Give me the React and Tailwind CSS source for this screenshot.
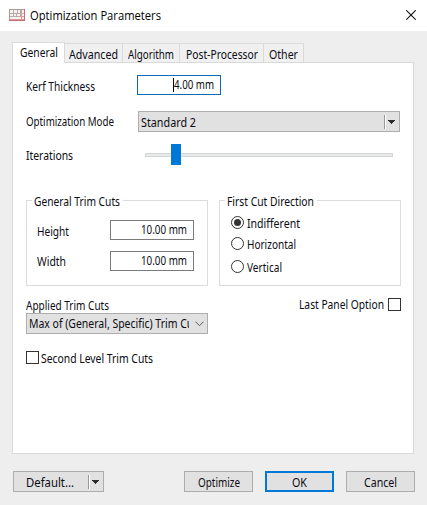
import React, { useLayoutEffect, useRef } from 'react';

// Condenses a label horizontally so that it occupies exactly `w` pixels.
function Label({ children, w, className = '' }) {
  const inner = useRef(null);
  useLayoutEffect(() => {
    const el = inner.current;
    const fit = () => {
      el.style.transform = 'none';
      el.style.transform = `scaleX(${w / el.getBoundingClientRect().width})`;
    };
    fit();
    document.fonts?.ready.then(fit);
  }, [w]);
  return (
    <span className={`block h-4 shrink-0 ${className}`} style={{ width: w }}>
      <span ref={inner} className="block w-max origin-left">{children}</span>
    </span>
  );
}

function Caret({ className = '' }) {
  return (
    <svg className={className} width="7" height="4" viewBox="0 0 7 4" shapeRendering="crispEdges">
      <path d="M0 0h7v1h-1v1h-1v1h-1v1h-1v-1h-1v-1h-1v-1h-1z" fill="#2b2b2b" />
    </svg>
  );
}

function Tab({ children, w, className }) {
  return (
    <div className={`flex h-[19px] items-center justify-center border-t border-r border-[#dadada] bg-[#f0f0f0] pt-[3px] ${className}`}>
      <Label w={w}>{children}</Label>
    </div>
  );
}

function Field({ children, className = 'border-[#7a7a7a]' }) {
  return (
    <div className={`flex h-5 w-[84px] items-center justify-end border bg-white pr-[6px] ${className}`}>
      {children}
    </div>
  );
}

function Group({ title, w, children }) {
  return (
    <section className="h-[86px] w-[182px] border border-[#dcdcdc]">
      <h2 className="-mt-2 ml-[5px] h-4 w-fit bg-white pt-px pr-[3px] pl-[2px]">
        <Label w={w}>{title}</Label>
      </h2>
      {children}
    </section>
  );
}

function Radio({ label, w, checked, className }) {
  return (
    <div className={`flex h-[13px] items-center gap-[3px] ${className}`}>
      <span className="flex size-[13px] shrink-0 items-center justify-center rounded-full border border-[#333] bg-white">
        {checked && <span className="size-[7px] rounded-full bg-[#333]" />}
      </span>
      <Label w={w} className="mt-[2px]">{label}</Label>
    </div>
  );
}

function Button({ children, w, className = 'border border-[#adadad]' }) {
  return (
    <div className={`flex h-[21px] w-[69px] items-center justify-center bg-[#e1e1e1] ${className}`}>
      <Label w={w} className="mt-[2px]">{children}</Label>
    </div>
  );
}

export default function App() {
  return (
    <div className="flex h-[505px] w-[427px] flex-col overflow-hidden bg-[#eeeeee] font-['Noto_Sans','Open_Sans',sans-serif] text-[12px] leading-4 whitespace-nowrap text-[#0c0c14]">
      <header className="flex h-[31px] shrink-0 items-center bg-white pl-[9px]">
        <svg width="16" height="12" viewBox="0 0 16 12" className="-mt-px">
          <rect x=".5" y=".5" width="15" height="11" fill="#f7f0ef" stroke="#a59d98" />
          <path d="M1 4.5h11M1 7.5h9M4.5 1v7M8.5 1v3M7.5 5v3M11.5 1v7" stroke="#b5aea8" fill="none" />
          <path d="M12.5 1v3.500h2M10 7.500h5M12.500 5v6M1 10.500h14" stroke="#dd9a9e" fill="none" />
          <path d="M15.500 0v12M0 11.500h16" stroke="#c96a70" fill="none" />
        </svg>
        <h1 className="mt-px ml-[5px] font-['Open_Sans','Noto_Sans',sans-serif] text-[12px] text-black">
          <Label w={131}>Optimization Parameters</Label>
        </h1>
        <svg className="-mt-px mr-[11px] ml-auto" width="10" height="10" viewBox="0 0 10 10">
          <path d="M.3.3 9.700 9.700M9.700.3.3 9.700" stroke="#111" strokeWidth="1.100" />
        </svg>
      </header>

      <nav className="mt-[11px] flex h-5 shrink-0 items-end pl-3">
        <div className="z-10 -mb-px flex h-[21px] w-[53px] items-center justify-center border-x border-t border-[#dadada] bg-white">
          <Label w={38}>General</Label>
        </div>
        <Tab w={49} className="w-[58px]">Advanced</Tab>
        <Tab w={46} className="w-[57px]">Algorithm</Tab>
        <Tab w={72} className="w-[84px]">Post-Processor</Tab>
        <Tab w={29} className="w-10">Other</Tab>
      </nav>

      <main className="ml-3 flex h-[392px] w-[402px] shrink-0 flex-col border border-[#d9d9d9] bg-white pt-3 pl-[13px]">
        <div className="flex h-5 items-center">
          <div className="w-[111px] pt-[3px]"><Label w={69}>Kerf Thickness</Label></div>
          <Field className="border-[#0f69b4]">
            <span className="h-[14px] w-px bg-black" />
            <Label w={40}>4.00 mm</Label>
          </Field>
        </div>

        <div className="mt-4 flex h-[21px] items-center">
          <div className="w-28"><Label w={88}>Optimization Mode</Label></div>
          <div className="flex h-[21px] w-[262px] items-center border border-[#adadad] bg-[#e1e1e1] pl-[2px]">
            <Label w={55} className="mt-[2px]">Standard 2</Label>
            <span className="ml-auto h-[14px] w-[2px] border-l border-[#999] bg-white" />
            <Caret className="mr-[4px] ml-[2px]" />
          </div>
        </div>

        <div className="mt-3 flex h-[21px] items-center">
          <div className="w-[119px] pt-[3px]"><Label w={47}>Iterations</Label></div>
          <div className="flex h-1 w-[248px] items-center border border-[#d6d6d6] bg-[#e7eaea]">
            <span className="ml-[25px] h-[21px] w-[10px] bg-[#0078d7]" />
          </div>
        </div>

        <div className="mt-[35px] flex gap-[11px]">
          <Group title="General Trim Cuts" w={86}>
            <div className="mt-[11px] flex h-5 items-center pl-[10px]">
              <div className="w-[73px] pt-[4px]"><Label w={32}>Height</Label></div>
              <Field><Label w={46}>10.00 mm</Label></Field>
            </div>
            <div className="mt-[11px] flex h-5 items-center pl-[10px]">
              <div className="w-[73px] pt-px"><Label w={29}>Width</Label></div>
              <Field><Label w={46}>10.00 mm</Label></Field>
            </div>
          </Group>
          <Group title="First Cut Direction" w={87}>
            <div className="pl-[11px]">
              <Radio label="Indifferent" w={53} checked className="mt-[7px]" />
              <Radio label="Horizontal" w={49} className="mt-2" />
              <Radio label="Vertical" w={35} className="mt-[10px]" />
            </div>
          </Group>
        </div>

        <div className="mt-[11px] flex h-4 w-[375px] items-center justify-between">
          <Label w={83} className="mt-px">Applied Trim Cuts</Label>
          <div className="-mt-px flex h-[13px] items-center gap-1">
            <Label w={85}>Last Panel Option</Label>
            <span className="size-[13px] border border-[#333]" />
          </div>
        </div>

        <div className="flex h-[21px] w-[182px] items-center border border-[#adadad] bg-[#e1e1e1] pl-[2px]">
          <div className="w-[160px] overflow-hidden pt-px"><Label w={173}>Max of (General, Specific) Trim Cuts</Label></div>
          <svg className="ml-[6px]" width="9" height="6" viewBox="0 0 9 6" fill="none">
            <path d="m.5.700 4 4 4-4" stroke="#555" />
          </svg>
        </div>

        <div className="mt-[17px] flex h-[13px] items-center gap-[2px]">
          <span className="size-[13px] border border-[#333]" />
          <Label w={112} className="mt-[2px]">Second Level Trim Cuts</Label>
        </div>
      </main>

      <footer className="mt-[17px] flex h-[21px] shrink-0 items-center gap-3 pl-[13px]">
        <div className="mr-[68px] flex h-[21px] w-[91px] items-center border border-[#adadad] bg-[#e1e1e1] pl-3">
          <Label w={48} className="mt-[2px]">Default...</Label>
          <span className="ml-auto h-[14px] w-[2px] border-l border-[#999] bg-white" />
          <Caret className="mr-[4px] ml-[2px]" />
        </div>
        <Button w={42}>Optimize</Button>
        <Button w={15} className="border-2 border-[#0078d7]">OK</Button>
        <Button w={33}>Cancel</Button>
      </footer>
    </div>
  );
}
